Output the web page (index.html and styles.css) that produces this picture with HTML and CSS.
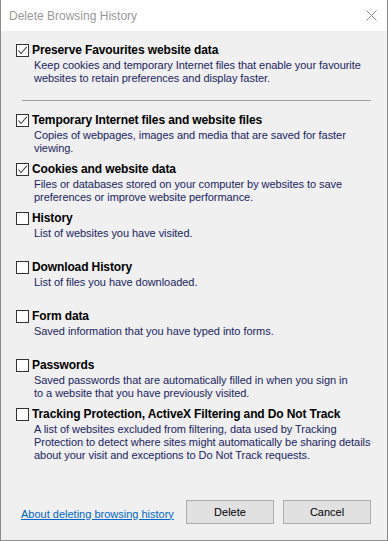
FILE: index.html
```html
<!DOCTYPE html>
<html>
<head>
<meta charset="utf-8">
<link rel="stylesheet" href="styles.css">
</head>
<body>
<div class="window">
  <div class="titlebar">
    <span class="title">Delete Browsing History</span>
    <svg class="close" width="11" height="11" viewBox="0 0 11 11"><path d="M0.5 0.5 L10.5 10.5 M10.5 0.5 L0.5 10.5" stroke="#8a8a8a" stroke-width="1" fill="none"/></svg>
  </div>
  <div class="content">
    <div class="item">
      <div class="head"><span class="cb checked"><svg width="11" height="11" viewBox="0 0 11 11"><path d="M1.5 5.5 L4 8.5 L9.8 1.8" stroke="#444" stroke-width="1.1" fill="none"/></svg></span><span class="label">Preserve Favourites website data</span></div>
      <div class="desc">Keep cookies and temporary Internet files that enable your favourite<br>websites to retain preferences and display faster.</div>
    </div>
    <div class="sep"></div>
    <div class="item">
      <div class="head"><span class="cb checked"><svg width="11" height="11" viewBox="0 0 11 11"><path d="M1.5 5.5 L4 8.5 L9.8 1.8" stroke="#444" stroke-width="1.1" fill="none"/></svg></span><span class="label">Temporary Internet files and website files</span></div>
      <div class="desc">Copies of webpages, images and media that are saved for faster<br>viewing.</div>
    </div>
    <div class="item">
      <div class="head"><span class="cb checked"><svg width="11" height="11" viewBox="0 0 11 11"><path d="M1.5 5.5 L4 8.5 L9.8 1.8" stroke="#444" stroke-width="1.1" fill="none"/></svg></span><span class="label">Cookies and website data</span></div>
      <div class="desc">Files or databases stored on your computer by websites to save<br>preferences or improve website performance.</div>
    </div>
    <div class="item">
      <div class="head"><span class="cb"></span><span class="label">History</span></div>
      <div class="desc">List of websites you have visited.</div>
    </div>
    <div class="item">
      <div class="head"><span class="cb"></span><span class="label">Download History</span></div>
      <div class="desc">List of files you have downloaded.</div>
    </div>
    <div class="item">
      <div class="head"><span class="cb"></span><span class="label">Form data</span></div>
      <div class="desc">Saved information that you have typed into forms.</div>
    </div>
    <div class="item">
      <div class="head"><span class="cb"></span><span class="label">Passwords</span></div>
      <div class="desc">Saved passwords that are automatically filled in when you sign in<br>to a website that you have previously visited.</div>
    </div>
    <div class="item">
      <div class="head"><span class="cb"></span><span class="label">Tracking Protection, ActiveX Filtering and Do Not Track</span></div>
      <div class="desc">A list of websites excluded from filtering, data used by Tracking<br>Protection to detect where sites might automatically be sharing details<br>about your visit and exceptions to Do Not Track requests.</div>
    </div>
    <div class="footer">
      <a class="link" href="#">About deleting browsing history</a>
      <div class="buttons">
        <button class="btn">Delete</button>
        <button class="btn">Cancel</button>
      </div>
    </div>
  </div>
</div>
</body>
</html>
```
FILE: styles.css
```css
html, body {
  margin: 0;
  padding: 0;
}
body {
  width: 388px;
  height: 541px;
  font-family: "Liberation Sans", Arial, sans-serif;
  font-size: 11px;
  background: #f0f0f0;
}
.window {
  box-sizing: border-box;
  width: 388px;
  height: 541px;
  border: 1px solid #8c8c8c;
  border-top: none;
  display: flex;
  flex-direction: column;
  background: #f0f0f0;
}
.titlebar {
  height: 31px;
  background: #ffffff;
  display: flex;
  align-items: center;
  justify-content: space-between;
  padding: 0 10px 0 8px;
  flex-shrink: 0;
}
.title {
  color: #9a9a9a;
  font-size: 12px;
  margin-top: 1px;
}
.close {
  display: block;
  margin-top: -1px;
}
.content {
  flex: 1;
  display: flex;
  flex-direction: column;
  padding: 11px 16px 16px 15px;
}
.item {
  height: 49px;
  flex-shrink: 0;
}
.head {
  display: flex;
  align-items: center;
  height: 16px;
}
.cb {
  box-sizing: border-box;
  width: 13px;
  height: 13px;
  border: 1px solid #333333;
  background: #ffffff;
  display: flex;
  align-items: center;
  justify-content: center;
  flex-shrink: 0;
}
.cb svg {
  display: block;
}
.label {
  font-weight: bold;
  font-size: 12px;
  letter-spacing: -0.12px;
  color: #000000;
  margin-left: 3px;
  line-height: 16px;
  white-space: nowrap;
}
.desc {
  margin-top: 1px;
  margin-left: 18px;
  line-height: 13px;
  font-size: 11px;
  letter-spacing: -0.05px;
  white-space: nowrap;
  color: #1a2560;
}
.sep {
  height: 1px;
  background: #a0a0a0;
  margin: 9px 0 11px 6px;
  flex-shrink: 0;
}
.footer {
  margin-top: auto;
  display: flex;
  align-items: center;
  justify-content: space-between;
  padding-left: 5px;
}
.link {
  color: #0066cc;
  text-decoration: underline;
  white-space: nowrap;
  font-size: 11px;
  margin-top: 3px;
}
.buttons {
  display: flex;
  gap: 9px;
}
.btn {
  box-sizing: border-box;
  width: 88px;
  height: 24px;
  background: #e1e1e1;
  border: 1px solid #adadad;
  font-family: "Liberation Sans", Arial, sans-serif;
  font-size: 11px;
  color: #000000;
  padding: 0;
}
```
